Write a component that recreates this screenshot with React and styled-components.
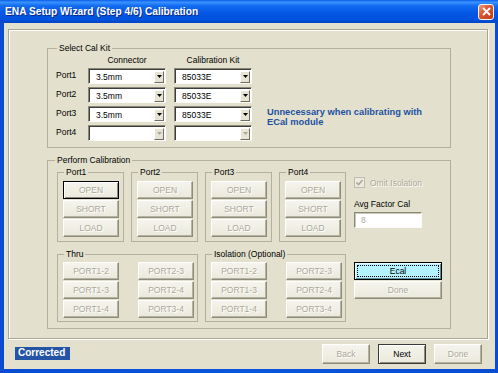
import { Fragment } from "react";
import styled, { createGlobalStyle } from "styled-components";

const GlobalStyle = createGlobalStyle`
  html, body { margin: 0; padding: 0; background: #fff; }
  body { font-family: "Liberation Sans", Arial, sans-serif; font-size: 8.5px; color: #000; }
  * { box-sizing: border-box; }
`;

const Window = styled.div`
  width: 498px;
  height: 373px;
  display: flex;
  flex-direction: column;
  background: linear-gradient(to right, #0a4bd2, #0b55e0 50%, #0a4bd2);
  overflow: hidden;
`;

const TitleBar = styled.div`
  height: 23px;
  flex: none;
  display: flex;
  align-items: center;
  justify-content: space-between;
  padding: 0 4px 0 5px;
  background: linear-gradient(
    to bottom,
    #0a5ee8 0%,
    #3b92ff 10%,
    #126cf0 25%,
    #0558e6 55%,
    #0152dc 85%,
    #0143c4 100%
  );
`;

const Title = styled.span`
  color: #fff;
  font-weight: bold;
  font-size: 10.2px;
  text-shadow: 1px 1px 0 #0b2a88;
`;

const CloseBtn = styled.div`
  width: 16px;
  height: 16px;
  border: 1px solid #f4f4f4;
  border-radius: 3px;
  background: linear-gradient(135deg, #ee9a7e, #d9532e 45%, #c23c18);
  display: flex;
  align-items: center;
  justify-content: center;
`;

const Client = styled.div`
  flex: 1;
  display: flex;
  flex-direction: column;
  margin: 0 3px 4px 4px;
  background: #e3e1cd;
`;

const Panel = styled.div`
  height: 310px;
  flex: none;
  margin: 6px 7px 0 4px;
  border: 1px solid #a9a793;
  box-shadow: inset 1px 1px 0 #fff, 1px 1px 0 #fff;
  padding: 18px 0 0 38px;
`;

// group box: the border line is the top of the box, the caption is pulled up onto it
const Group = styled.div`
  width: ${(p) => p.$w}px;
  height: ${(p) => p.$h}px;
  margin-top: ${(p) => p.$mt || 0}px;
  border: 1px solid #b3b19e;
  grid-column: ${(p) => p.$span || "auto"};
`;

const Caption = styled.div`
  width: fit-content;
  margin: -6px 0 ${(p) => p.$gap}px ${(p) => p.$lm}px;
  padding: 0 2px;
  line-height: 10px;
  background: #e3e1cd;
`;

const KitGrid = styled.div`
  display: grid;
  grid-template-columns: 24px 78px 78px auto;
  grid-template-rows: 9px repeat(4, 16px);
  column-gap: 8px;
  row-gap: 3px;
  align-items: center;
  margin-left: 8px;
`;

const ColHead = styled.div`
  grid-row: 1;
  grid-column: ${(p) => p.$col};
  text-align: center;
  line-height: 9px;
`;

const PortLabel = styled.div`
  grid-row: ${(p) => p.$row};
  grid-column: 1;
  line-height: 10px;
  margin-top: -2px;
`;

const Combo = styled.div`
  grid-row: ${(p) => p.$row};
  grid-column: ${(p) => p.$col};
  height: 16px;
  display: flex;
  align-items: center;
  justify-content: space-between;
  background: #fff;
  border: 1px solid;
  border-color: #8a8876 #fbfbf7 #fbfbf7 #8a8876;
  box-shadow: inset 1px 1px 0 #3c3c3c;
  padding-left: 7px;
  padding-top: 1px;
  line-height: 10px;
`;

const Arrow = styled.span`
  width: 10px;
  height: 12px;
  margin-right: 1px;
  display: flex;
  align-items: center;
  justify-content: center;
  background: #e6e4d4;
  border: 1px solid;
  border-color: #fff #6f6d60 #6f6d60 #fff;
`;

const Note = styled.div`
  grid-column: 4;
  grid-row: 4 / 6;
  align-self: start;
  padding: 1px 0 0 7px;
  color: #1e50a2;
  font-weight: bold;
  font-size: 9.3px;
  line-height: 10px;
`;

const CalGrid = styled.div`
  display: grid;
  grid-template-columns: 67px 67px 67px 67px 1fr;
  column-gap: 7px;
  row-gap: 7px;
  margin-left: 9px;
`;

const Stack = styled.div`
  display: flex;
  flex-direction: column;
  gap: 1px;
  margin-left: 5px;
`;

const PairGrid = styled.div`
  display: grid;
  grid-template-columns: 56px 56px;
  grid-auto-rows: 18px;
  column-gap: 19px;
  row-gap: 1px;
  margin-left: 5px;
`;

const Btn = styled.button`
  width: ${(p) => p.$w || 56}px;
  height: ${(p) => p.$h || 18}px;
  padding: 0;
  font-family: inherit;
  font-size: 8.5px;
  color: ${(p) => (p.disabled ? "#aca899" : "#000")};
  text-shadow: ${(p) => (p.disabled ? "1px 1px 0 #fff" : "none")};
  background: linear-gradient(#f5f4ed, #ebe9dc);
  border: 1px solid;
  border-color: ${(p) =>
    p.$focus ? "#000" : "#fff #8d8b7a #8d8b7a #fff"};
  box-shadow: ${(p) =>
    p.$focus
      ? "inset 1px 1px 0 #fff, inset -1px -1px 0 #8d8b7a"
      : "inset -1px -1px 0 #b4b2a0"};
`;

const EcalBtn = styled(Btn)`
  background: #b3f3ff;
  border-color: #000;
  box-shadow: inset 1px 1px 0 #e8fdff, inset -1px -1px 0 #5e8e9c;
  outline: 1px dotted #000;
  outline-offset: -4px;
`;

const SideCol = styled.div`
  padding: 10px 0 0 1px;
  display: flex;
  flex-direction: column;
`;

const CheckRow = styled.div`
  display: flex;
  align-items: center;
  gap: 5px;
  height: 11px;
  color: #aca899;
  text-shadow: 1px 1px 0 #fff;
`;

const CheckBox = styled.span`
  width: 11px;
  height: 11px;
  border: 1px solid #bebcad;
  background: #eceadf;
  display: flex;
  align-items: center;
  justify-content: center;
`;

const FieldLabel = styled.div`
  margin-top: 11px;
  line-height: 10px;
`;

const TextBox = styled.div`
  margin-top: 3px;
  width: 68px;
  height: 16px;
  background: #fff;
  border: 1px solid;
  border-color: #8a8876 #fbfbf7 #fbfbf7 #8a8876;
  box-shadow: inset 1px 1px 0 #c9c7b8;
  padding: 2px 0 0 6px;
  color: #aca899;
  line-height: 10px;
`;

const EcalCol = styled.div`
  padding: 13px 0 0 1px;
  display: flex;
  flex-direction: column;
  gap: 1px;
`;

const Footer = styled.div`
  flex: 1;
  display: flex;
  align-items: center;
  padding: 0 13px 0 11px;
  gap: 8px;
`;

const Badge = styled.span`
  background: #2553a6;
  color: #fff;
  font-weight: bold;
  font-size: 10px;
  line-height: 12px;
  height: 13px;
  padding: 0 5px 0 3px;
  margin-top: -2px;
`;

const Spacer = styled.div`
  flex: 1;
`;

const NavBtn = styled(Btn)`
  border-color: ${(p) => (p.$default ? "#3a3a3a" : "#fff #8d8b7a #8d8b7a #fff")};
  box-shadow: ${(p) =>
    p.$default
      ? "inset 1px 1px 0 #fff, inset -1px -1px 0 #8d8b7a"
      : "inset -1px -1px 0 #b4b2a0"};
`;

const DownTri = ({ color }) => (
  <svg width="5" height="3" viewBox="0 0 5 3">
    <path d="M0 0h5L2.5 3z" fill={color} />
  </svg>
);

const ports = [
  { name: "Port1", conn: "3.5mm", kit: "85033E" },
  { name: "Port2", conn: "3.5mm", kit: "85033E" },
  { name: "Port3", conn: "3.5mm", kit: "85033E" },
  { name: "Port4", conn: "", kit: "", off: true },
];

const pairs = ["PORT1-2", "PORT2-3", "PORT1-3", "PORT2-4", "PORT1-4", "PORT3-4"];

const App = () => (
  <>
    <GlobalStyle />
    <Window>
      <TitleBar>
        <Title>ENA Setup Wizard (Step 4/6) Calibration</Title>
        <CloseBtn>
          <svg width="9" height="9" viewBox="0 0 9 9">
            <path d="M1 1L8 8M8 1L1 8" stroke="#fff" strokeWidth="1.8" />
          </svg>
        </CloseBtn>
      </TitleBar>
      <Client>
        <Panel>
          <Group $w={404} $h={100}>
            <Caption $lm={9} $gap={3}>Select Cal Kit</Caption>
            <KitGrid>
              <ColHead $col={2}>Connector</ColHead>
              <ColHead $col={3}>Calibration Kit</ColHead>
              {ports.map((p, i) => (
                <Fragment key={p.name}>
                  <PortLabel $row={i + 2}>{p.name}</PortLabel>
                  <Combo $row={i + 2} $col={2}>
                    <span>{p.conn}</span>
                    <Arrow>
                      <DownTri color={p.off ? "#aca899" : "#000"} />
                    </Arrow>
                  </Combo>
                  <Combo $row={i + 2} $col={3}>
                    <span>{p.kit}</span>
                    <Arrow>
                      <DownTri color={p.off ? "#aca899" : "#000"} />
                    </Arrow>
                  </Combo>
                </Fragment>
              ))}
              <Note>
                Unnecessary when calibrating with
                <br />
                ECal module
              </Note>
            </KitGrid>
          </Group>

          <Group $w={404} $h={169} $mt={12}>
            <Caption $lm={7} $gap={2}>Perform Calibration</Caption>
            <CalGrid>
              {["Port1", "Port2", "Port3", "Port4"].map((n, i) => (
                <Group key={n} $w={67} $h={70} $mt={5}>
                  <Caption $lm={6} $gap={4}>{n}</Caption>
                  <Stack>
                    <Btn disabled $focus={i === 0}>OPEN</Btn>
                    <Btn disabled>SHORT</Btn>
                    <Btn disabled>LOAD</Btn>
                  </Stack>
                </Group>
              ))}
              <SideCol>
                <CheckRow>
                  <CheckBox>
                    <svg width="7" height="7" viewBox="0 0 7 7">
                      <path
                        d="M0.5 3.5L2.5 5.5L6.5 1"
                        stroke="#aca899"
                        strokeWidth="1.6"
                        fill="none"
                      />
                    </svg>
                  </CheckBox>
                  Omit Isolation
                </CheckRow>
                <FieldLabel>Avg Factor Cal</FieldLabel>
                <TextBox>8</TextBox>
              </SideCol>

              <Group $span="1 / 3" $w={141} $h={68} $mt={5}>
                <Caption $lm={6} $gap={3}>Thru</Caption>
                <PairGrid>
                  {pairs.map((t) => (
                    <Btn key={t} disabled>
                      {t}
                    </Btn>
                  ))}
                </PairGrid>
              </Group>
              <Group $span="3 / 5" $w={141} $h={68} $mt={5}>
                <Caption $lm={6} $gap={3}>Isolation (Optional)</Caption>
                <PairGrid>
                  {pairs.map((t) => (
                    <Btn key={t} disabled>
                      {t}
                    </Btn>
                  ))}
                </PairGrid>
              </Group>
              <EcalCol>
                <EcalBtn $w={88}>Ecal</EcalBtn>
                <Btn $w={88} disabled>
                  Done
                </Btn>
              </EcalCol>
            </CalGrid>
          </Group>
        </Panel>
        <Footer>
          <Badge>Corrected</Badge>
          <Spacer />
          <NavBtn $w={48} $h={20} disabled>
            Back
          </NavBtn>
          <NavBtn $w={48} $h={20} $default>
            Next
          </NavBtn>
          <NavBtn $w={48} $h={20} disabled>
            Done
          </NavBtn>
        </Footer>
      </Client>
    </Window>
  </>
);

export default App;
